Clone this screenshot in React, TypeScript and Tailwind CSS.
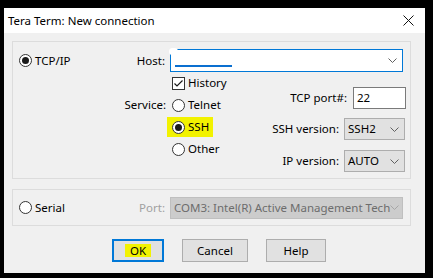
import React from "react";

const font = { fontFamily: '"Segoe UI", "Noto Sans", "Open Sans", sans-serif' };

const Chevron = ({ light = false }: { light?: boolean }) => (
  <svg width="9" height="5" viewBox="0 0 9 5" className="shrink-0">
    <polyline
      points="0.5,0.5 4.5,4.5 8.5,0.5"
      fill="none"
      stroke={light ? "#a6a6a6" : "#606060"}
      strokeWidth="1"
    />
  </svg>
);

const Radio = ({ checked = false }: { checked?: boolean }) => (
  <span className="flex h-[13px] w-[13px] shrink-0 items-center justify-center rounded-full border border-[#333333] bg-white">
    {checked && <span className="h-[7px] w-[7px] rounded-full bg-[#1a1a1a]" />}
  </span>
);

const Checkbox = () => (
  <span className="flex h-[13px] w-[13px] shrink-0 items-center justify-center border border-[#333333] bg-white">
    <svg width="9" height="7" viewBox="0 0 9 7">
      <polyline points="0.5,3.5 3,6 8.5,0.5" fill="none" stroke="#1a1a1a" strokeWidth="1.2" />
    </svg>
  </span>
);

const Select = ({ value, width }: { value: string; width: string }) => (
  <div
    className={`flex h-[22px] ${width} items-center justify-between border border-[#adadad] bg-[#e1e1e1] pl-[3px] pr-[5px]`}
  >
    <span>{value}</span>
    <Chevron />
  </div>
);

const Button = ({
  label,
  width,
  focused = false,
}: {
  label: string;
  width: string;
  focused?: boolean;
}) => (
  <div
    className={`flex h-[23px] ${width} items-center justify-center bg-[#e1e1e1] ${
      focused ? "border-2 border-[#0078d7]" : "border border-[#adadad]"
    }`}
  >
    {focused ? <span className="bg-[#f2f200] px-[5px] leading-[13px]">{label}</span> : label}
  </div>
);

const App = () => {
  return (
    <div
      className="h-[278px] w-[433px] overflow-hidden bg-black pl-[4px] pt-[8px] text-[11.5px] text-black"
      style={font}
    >
      <div className="flex h-[265px] w-[421px] flex-col bg-[#f0f0f0]">
        {/* title bar */}
        <div className="flex h-[25px] items-center justify-between bg-white pl-[4px] pr-[11px]">
          <span>Tera Term: New connection</span>
          <svg width="11" height="11" viewBox="0 0 11 11">
            <path d="M0.5 0.5 L10.5 10.5 M10.5 0.5 L0.5 10.5" stroke="#111" strokeWidth="1" />
          </svg>
        </div>

        {/* TCP/IP group */}
        <div className="ml-[8px] mt-[8px] flex h-[138px] w-[399px] flex-col border border-[#dcdcdc] pt-[7px]">
          <div className="flex h-[23px] items-center">
            <div className="flex w-[152px] items-center justify-between pl-[6px]">
              <span className="flex items-center gap-[3px]">
                <Radio checked />
                TCP/IP
              </span>
              <span>Host:</span>
            </div>
            <div className="relative ml-[5px] flex h-[23px] w-[233px] items-center justify-end border border-[#0078d7] bg-white pr-[5px]">
              <span className="absolute left-[-2px] top-[-2px] h-[7px] w-[9px] rounded-full bg-white" />
              <span className="absolute left-[4px] top-[15px] h-[2px] w-[57px] bg-[#0a6fd0]" />
              <Chevron />
            </div>
          </div>

          <div className="flex">
            <div className="flex flex-col">
              <div className="flex h-[22px] items-center pl-[159px]">
                <Checkbox />
                <span className="ml-[3px]">History</span>
              </div>
              <div className="flex h-[22px] items-center">
                <span className="w-[153px] text-right">Service:</span>
                <span className="ml-[6px] flex items-center gap-[3px]">
                  <Radio />
                  Telnet
                </span>
              </div>
              <div className="flex h-[22px] items-center">
                <span className="w-[153px]" />
                <span className="ml-[1px] flex items-center gap-[3px] bg-[#f2f200] py-[1px] pl-[5px] pr-[4px]">
                  <Radio checked />
                  SSH
                </span>
              </div>
              <div className="flex h-[22px] items-center">
                <span className="w-[153px]" />
                <span className="ml-[6px] flex items-center gap-[3px]">
                  <Radio />
                  Other
                </span>
              </div>
            </div>

            <div className="ml-auto mr-[4px] mt-[15px] flex flex-col items-end">
              <div className="flex items-center">
                <span>TCP port#:</span>
                <div className="ml-[6px] flex h-[22px] w-[53px] items-center border border-[#7a7a7a] bg-white pl-[3px]">
                  22
                </div>
              </div>
              <div className="mr-[1px] mt-[9px] flex items-center">
                <span>SSH version:</span>
                <div className="ml-[5px]">
                  <Select value="SSH2" width="w-[61px]" />
                </div>
              </div>
              <div className="mr-[1px] mt-[10px] flex items-center">
                <span>IP version:</span>
                <div className="ml-[5px]">
                  <Select value="AUTO" width="w-[61px]" />
                </div>
              </div>
            </div>
          </div>
        </div>

        {/* Serial group */}
        <div className="ml-[8px] mt-[10px] flex h-[37px] w-[399px] items-center border border-[#dcdcdc]">
          <div className="flex w-[152px] items-center justify-between pl-[6px]">
            <span className="flex items-center gap-[3px]">
              <Radio />
              Serial
            </span>
            <span className="text-[#a0a0a0]">Port:</span>
          </div>
          <div className="ml-[5px] flex h-[22px] w-[233px] items-center border border-[#bfbfbf] bg-[#cccccc] pl-[3px] pr-[5px] text-[#6d6d6d]">
            <span className="whitespace-nowrap">COM3: Intel(R) Active Management Tech</span>
            <span className="ml-auto">
              <Chevron light />
            </span>
          </div>
        </div>

        {/* buttons */}
        <div className="mt-[13px] flex gap-[18px] pl-[108px]">
          <Button label="OK" width="w-[52px]" focused />
          <Button label="Cancel" width="w-[66px]" />
          <Button label="Help" width="w-[60px]" />
        </div>
      </div>
    </div>
  );
};

export default App;
